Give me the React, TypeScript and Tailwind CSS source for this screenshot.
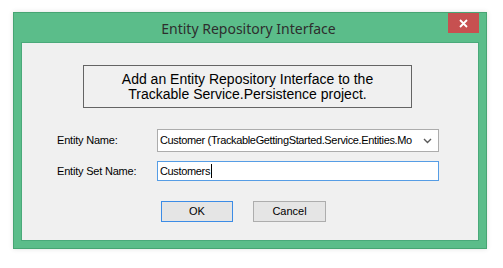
import React from 'react';

const sans = { fontFamily: '"Liberation Sans", Arial, sans-serif' };

function Chevron() {
  return (
    <svg width="9" height="6" viewBox="0 0 9 6" className="shrink-0">
      <polyline points="1,1 4.5,4.5 8,1" fill="none" stroke="#5a5a5a" strokeWidth="1.4" />
    </svg>
  );
}

function CloseIcon() {
  return (
    <svg width="9" height="9" viewBox="0 0 9 9">
      <path d="M1 1 L8 8 M8 1 L1 8" stroke="#ffffff" strokeWidth="1.8" />
    </svg>
  );
}

export default function App() {
  return (
    <div className="w-[503px] h-[268px] bg-white overflow-hidden pt-[12px] pl-[13px]">
      <div className="w-[474px] h-[237px] flex flex-col border border-[#47a573] bg-[#5bbd8a] shadow-[0_0_5px_rgba(0,0,0,0.12)]">
        {/* Title bar */}
        <div className="relative h-[29px] shrink-0 flex items-center justify-center">
          <span
            className="text-[14px] text-[#2e2e2e] mt-[2px] mr-[3px]"
            style={{ fontFamily: '"Noto Sans", "Open Sans", sans-serif' }}
          >
            Entity Repository Interface
          </span>
          <button
            type="button"
            className="absolute right-[7px] top-0 w-[31px] h-[20px] bg-[#c75050] flex items-center justify-center"
          >
            <CloseIcon />
          </button>
        </div>

        {/* Client area */}
        <div className="mx-[7px] mb-[7px] flex-1 border border-[#4aa97a] bg-[#f0f0f0] flex flex-col" style={sans}>
          <div className="ml-[61px] mt-[22px] w-[329px] h-[43px] border border-[#646464] flex flex-col items-center justify-center text-[14px] leading-[15px] text-black">
            <span>Add an Entity Repository Interface to the</span>
            <span>Trackable Service.Persistence project.</span>
          </div>

          <div className="mt-[21px] flex items-center text-[11px] tracking-[-0.2px] text-black">
            <span className="ml-[35px] w-[100px]">Entity Name:</span>
            <div className="w-[282px] h-[23px] border border-[#acacac] bg-white flex items-center pl-[2px] pr-[6px]">
              <span className="flex-1 whitespace-nowrap text-[11px] tracking-[-0.35px]">
                Customer (TrackableGettingStarted.Service.Entities.Mo
              </span>
              <Chevron />
            </div>
          </div>

          <div className="mt-[9px] flex items-center text-[11px] tracking-[-0.2px] text-black">
            <span className="ml-[35px] w-[100px]">Entity Set Name:</span>
            <div className="w-[282px] h-[20px] border border-[#569de5] bg-white flex items-center pl-[2px]">
              <span className="text-[11px] tracking-[-0.35px]">Customers</span>
              <span className="ml-[1px] w-[1px] h-[14px] bg-black" />
            </div>
          </div>

          <div className="mt-[20px] flex text-[11px] text-black">
            <button
              type="button"
              className="ml-[139px] w-[72px] h-[21px] border border-[#3c8ce6] bg-[#e5e5e5] flex items-center justify-center"
            >
              OK
            </button>
            <button
              type="button"
              className="ml-[20px] w-[73px] h-[21px] border border-[#adadad] bg-[#e5e5e5] flex items-center justify-center"
            >
              Cancel
            </button>
          </div>
        </div>
      </div>
    </div>
  );
}
